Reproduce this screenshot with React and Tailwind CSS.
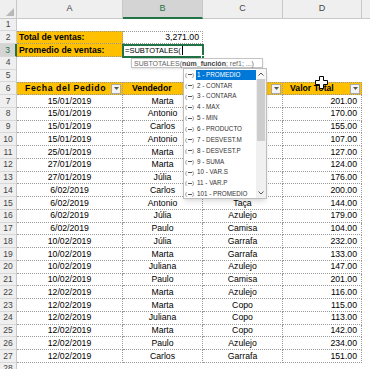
import React from 'react';

const data = [
  ['15/01/2019', 'Marta', '', '201.00'],
  ['15/01/2019', 'Antonio', '', '170.00'],
  ['15/01/2019', 'Carlos', '', '155.00'],
  ['15/01/2019', 'Antonio', '', '107.00'],
  ['25/01/2019', 'Marta', '', '127.00'],
  ['27/01/2019', 'Marta', '', '124.00'],
  ['27/01/2019', 'Júlia', '', '176.00'],
  ['6/02/2019', 'Carlos', '', '200.00'],
  ['6/02/2019', 'Antonio', 'Taça', '144.00'],
  ['6/02/2019', 'Júlia', 'Azulejo', '179.00'],
  ['6/02/2019', 'Paulo', 'Camisa', '104.00'],
  ['10/02/2019', 'Júlia', 'Garrafa', '232.00'],
  ['10/02/2019', 'Marta', 'Garrafa', '133.00'],
  ['10/02/2019', 'Juliana', 'Azulejo', '147.00'],
  ['10/02/2019', 'Paulo', 'Camisa', '201.00'],
  ['12/02/2019', 'Marta', 'Azulejo', '116.00'],
  ['12/02/2019', 'Marta', 'Copo', '115.00'],
  ['12/02/2019', 'Juliana', 'Copo', '113.00'],
  ['12/02/2019', 'Marta', 'Copo', '142.00'],
  ['12/02/2019', 'Paulo', 'Azulejo', '234.00'],
  ['12/02/2019', 'Carlos', 'Garrafa', '151.00'],
];

const functions = [
  '1 - PROMEDIO', '2 - CONTAR', '3 - CONTARA', '4 - MAX', '5 - MIN', '6 - PRODUCTO',
  '7 - DESVEST.M', '8 - DESVEST.P', '9 - SUMA', '10 - VAR.S', '11 - VAR.P', '101 - PROMEDIO',
];

const dotted = 'border-r border-b border-dotted border-[#9a9a9a]';

function RowHead({ n, active }) {
  return (
    <div
      className={`flex w-[17px] shrink-0 items-center justify-center border-b border-[#d8d8d8] text-[8.5px] ${
        active
          ? 'border-r-2 border-r-[#217346] bg-[#d4d4d4] text-[#217346]'
          : 'border-r border-r-[#c8c8c8] bg-[#efefef] text-[#444]'
      }`}
    >
      {n}
    </div>
  );
}

function FilterBtn() {
  return (
    <span className="ml-auto mr-[1px] flex h-[10px] w-[10px] shrink-0 items-center justify-center border border-[#a8a8a8] bg-[#f4f4f4]">
      <svg width="5" height="3" viewBox="0 0 5 3">
        <path d="M0 0h5L2.5 3z" fill="#555" />
      </svg>
    </span>
  );
}

function Row({ n, children, active }) {
  return (
    <div className="flex h-[12.75px]">
      <RowHead n={n} active={active} />
      {children}
    </div>
  );
}

function App() {
  return (
    <div className="relative h-[369px] w-[370px] overflow-hidden bg-white font-['Liberation_Sans',Arial,sans-serif] text-[8.7px] leading-none text-black">
      {/* column headers */}
      <div className="flex h-[18.5px] bg-[#efefef] text-[9px] text-[#444]">
        <div className="relative w-[17px] shrink-0 border-r border-b border-[#c8c8c8]">
          <svg className="absolute bottom-[2px] right-[2px]" width="8" height="8" viewBox="0 0 8 8">
            <path d="M8 0v8H0z" fill="#b8b8b8" />
          </svg>
        </div>
        <div className="flex w-[106px] items-center justify-center border-r border-b border-[#c8c8c8]">A</div>
        <div className="flex w-[80px] items-center justify-center border-r border-[#c8c8c8] border-b-2 border-b-[#217346] bg-[#d4d4d4] text-[#217346]">B</div>
        <div className="flex w-[80px] items-center justify-center border-r border-b border-[#c8c8c8]">C</div>
        <div className="flex w-[79px] items-center justify-center border-r border-b border-[#c8c8c8]">D</div>
        <div className="flex-1 border-b border-[#c8c8c8]" />
      </div>

      <Row n={1} />
      <Row n={2}>
        <div className={`flex w-[106px] items-center border-t ${dotted} bg-[#ffc000] pl-[2px] font-bold`}>Total de ventas:</div>
        <div className={`flex w-[80px] items-center justify-end border-t ${dotted} pr-[3px]`}>3,271.00</div>
      </Row>
      <Row n={3} active>
        <div className={`flex w-[106px] items-center ${dotted} bg-[#ffc000] pl-[2px] font-bold`}>Promedio de ventas:</div>
        <div className="flex w-[80px] items-center pl-[2px] text-[7.5px]">
          =SUBTOTALES(
          <span className="ml-[1px] h-[9px] w-px bg-black" />
        </div>
      </Row>
      <Row n={4} />
      <Row n={5} />
      <Row n={6}>
        <div className={`flex w-[106px] items-center border-t ${dotted} bg-[#ffc000] pl-[8px] font-bold tracking-[0.6px]`}>
          Fecha del Pedido
          <FilterBtn />
        </div>
        <div className={`flex w-[80px] items-center border-t ${dotted} bg-[#ffc000] pl-[9px] font-bold`}>
          Vendedor
          <FilterBtn />
        </div>
        <div className={`flex w-[80px] items-center border-t ${dotted} bg-[#ffc000] pl-[8px] font-bold`}>
          <FilterBtn />
        </div>
        <div className={`flex w-[79px] items-center border-t ${dotted} bg-[#ffc000] pl-[7px] font-bold`}>
          Valor Total
          <FilterBtn />
        </div>
      </Row>
      {data.map((r, i) => (
        <Row key={i} n={i + 7}>
          <div className={`flex w-[106px] items-center justify-center ${dotted}`}>{r[0]}</div>
          <div className={`flex w-[80px] items-center justify-center ${dotted}`}>{r[1]}</div>
          <div className={`flex w-[80px] items-center justify-center ${dotted}`}>{r[2]}</div>
          <div className={`flex w-[79px] items-center justify-end pr-[4px] ${dotted}`}>{r[3]}</div>
        </Row>
      ))}
      <Row n={28} />

      {/* active cell B3 */}
      <div className="absolute left-[122px] top-[43.5px] h-[14.5px] w-[82px] border-2 border-[#217346]" />
      <div className="absolute left-[201px] top-[55px] h-[4px] w-[4px] border border-white bg-[#217346]" />

      {/* formula tooltip */}
      <div className="absolute left-[131px] top-[58px] flex h-[10px] w-[132px] items-center border border-[#c4c4c4] bg-white pl-[2px] text-[7px] text-[#666] shadow-sm">
        SUBTOTALES(<b className="text-[#444]">núm_función</b>; ref1; ...)
      </div>

      {/* autocomplete list */}
      <div className="absolute left-[183px] top-[68px] flex h-[131px] w-[84px] border border-[#bdbdbd] bg-white shadow-md">
        <div className="flex-1 pt-[0.5px]">
          {functions.map((f, i) => (
            <div key={f} className="flex h-[10.85px] items-center">
              <span className="flex w-[12px] shrink-0 items-center pl-[1px] text-[6px] text-[#555]">
                (<span className="mx-[0.5px] inline-block h-px w-[4px] bg-[#555]" />)
              </span>
              <span
                className={`flex h-full flex-1 items-center pl-[1px] text-[6.3px] ${
                  i === 0 ? 'bg-[#0078d7] text-white' : 'text-[#333]'
                }`}
              >
                {f}
              </span>
            </div>
          ))}
        </div>
        <div className="flex w-[10px] flex-col bg-[#f0f0f0]">
          <div className="flex h-[10px] items-center justify-center bg-[#f7f7f7]">
            <svg width="6" height="4" viewBox="0 0 6 4">
              <path d="M0.5 3.5L3 1l2.5 2.5" stroke="#555" fill="none" strokeWidth="1" />
            </svg>
          </div>
          <div className="mx-[1px] h-[62px] bg-[#cdcdcd]" />
          <div className="flex-1" />
          <div className="flex h-[10px] items-center justify-center">
            <svg width="6" height="4" viewBox="0 0 6 4">
              <path d="M0.5 0.5L3 3l2.5-2.5" stroke="#555" fill="none" strokeWidth="1" />
            </svg>
          </div>
        </div>
      </div>

      {/* move cursor */}
      <svg className="absolute left-[315px] top-[76px]" width="13" height="13" viewBox="0 0 13 13">
        <path d="M4.5 0.5h4v4h4v4h-4v4h-4v-4h-4v-4h4z" fill="white" stroke="black" strokeWidth="1" />
      </svg>
    </div>
  );
}

export default App;
